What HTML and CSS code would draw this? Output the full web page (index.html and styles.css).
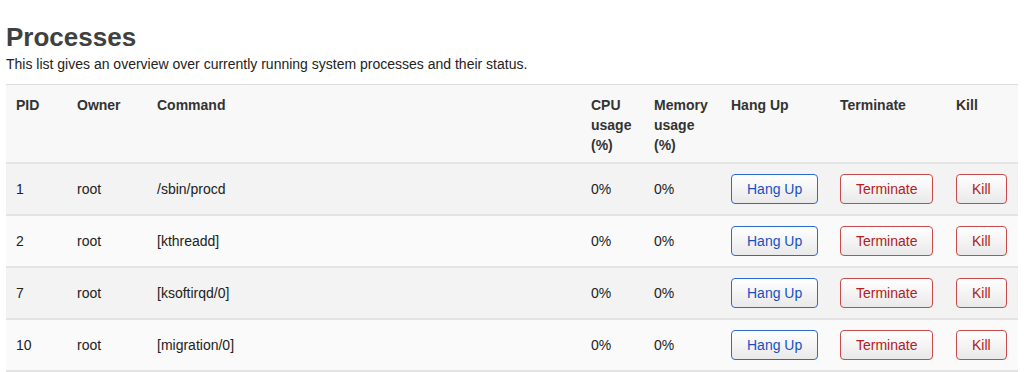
FILE: index.html
```html
<!DOCTYPE html>
<html>
<head>
<meta charset="utf-8">
<link rel="stylesheet" href="styles.css">
</head>
<body>
<div class="page">
  <h2 class="title">Processes</h2>
  <p class="desc">This list gives an overview over currently running system processes and their status.</p>
  <table class="proc">
    <colgroup>
      <col class="c-pid"><col class="c-owner"><col class="c-cmd"><col class="c-cpu"><col class="c-mem"><col class="c-hup"><col class="c-term"><col class="c-kill">
    </colgroup>
    <thead>
      <tr>
        <th>PID</th><th>Owner</th><th>Command</th><th>CPU usage (%)</th><th>Memory usage (%)</th><th>Hang Up</th><th>Terminate</th><th>Kill</th>
      </tr>
    </thead>
    <tbody>
      <tr>
        <td>1</td><td>root</td><td>/sbin/procd</td><td>0%</td><td>0%</td>
        <td><button class="btn btn-blue">Hang Up</button></td>
        <td><button class="btn btn-red">Terminate</button></td>
        <td><button class="btn btn-red">Kill</button></td>
      </tr>
      <tr>
        <td>2</td><td>root</td><td>[kthreadd]</td><td>0%</td><td>0%</td>
        <td><button class="btn btn-blue">Hang Up</button></td>
        <td><button class="btn btn-red">Terminate</button></td>
        <td><button class="btn btn-red">Kill</button></td>
      </tr>
      <tr>
        <td>7</td><td>root</td><td>[ksoftirqd/0]</td><td>0%</td><td>0%</td>
        <td><button class="btn btn-blue">Hang Up</button></td>
        <td><button class="btn btn-red">Terminate</button></td>
        <td><button class="btn btn-red">Kill</button></td>
      </tr>
      <tr>
        <td>10</td><td>root</td><td>[migration/0]</td><td>0%</td><td>0%</td>
        <td><button class="btn btn-blue">Hang Up</button></td>
        <td><button class="btn btn-red">Terminate</button></td>
        <td><button class="btn btn-red">Kill</button></td>
      </tr>
    </tbody>
  </table>
</div>
</body>
</html>
```

FILE: styles.css
```css
html, body {
  margin: 0;
  padding: 0;
  background: #fff;
}
body {
  font-family: "Liberation Sans", Arial, sans-serif;
  font-size: 14px;
  color: #333;
}
.page {
  padding: 0 6px;
}
.title {
  margin: 0;
  padding-top: 22px;
  font-size: 26px;
  line-height: 30px;
  font-weight: bold;
  color: #404040;
}
.desc {
  margin: 2px 0 10px;
  line-height: 20px;
  color: #222;
}
.proc {
  width: 1012px;
  border-collapse: collapse;
  table-layout: fixed;
}
.c-pid { width: 61px; }
.c-owner { width: 80px; }
.c-cmd { width: 434px; }
.c-cpu { width: 63px; }
.c-mem { width: 77px; }
.c-hup { width: 109px; }
.c-term { width: 116px; }
.c-kill { width: 72px; }
.proc th {
  text-align: left;
  vertical-align: top;
  font-weight: bold;
  line-height: 20px;
  padding: 10px 10px 7px;
  background: #f8f8f8;
  border-top: 1px solid #dcdcdc;
  color: #333;
}
.proc td {
  padding: 10px 10px;
  line-height: 20px;
  vertical-align: middle;
  border-top: 2px solid #e4e4e4;
  color: #222;
}
.proc tbody tr:nth-child(odd) td { background: #f3f3f3; }
.proc tbody tr:nth-child(even) td { background: #fafafa; }
.proc tbody tr:last-child td { border-bottom: 2px solid #e4e4e4; }
.btn {
  display: block;
  font-family: "Liberation Sans", Arial, sans-serif;
  font-size: 14px;
  height: 30px;
  padding: 0 15px;
  border-radius: 4px;
  background: linear-gradient(#ffffff, #e9e9e9);
  cursor: pointer;
}
.btn-blue {
  border: 1px solid #2a6ad6;
  color: #1650c8;
}
.btn-red {
  border: 1px solid #c84a4a;
  color: #b3201e;
}
```
